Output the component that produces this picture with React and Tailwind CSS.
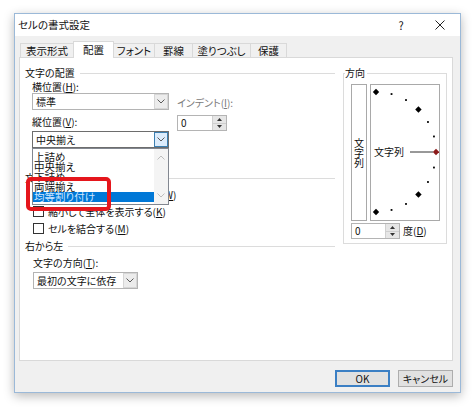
import React from 'react';

// Windows-style "セルの書式設定" dialog, 配置 tab

const Chevron = ({ className = 'text-[#5a5a5a]', up = false }) => (
  <svg width="8" height="5" viewBox="0 0 8 5" className={className}>
    <path
      d={up ? 'M0.5 4.5 L4 1 L7.5 4.5' : 'M0.5 0.5 L4 4 L7.5 0.5'}
      fill="none"
      stroke="currentColor"
      strokeWidth="1"
    />
  </svg>
);

const Combo = ({ value, width, focused = false }) => (
  <div
    className={`flex h-[17px] ${width} border bg-white ${
      focused ? 'border-[#6d6d6d]' : 'border-[#b4b4b4]'
    }`}
  >
    <div className="flex-1 pl-[3px] leading-[15px]">{value}</div>
    <div
      className={`flex w-[14px] items-center justify-center border ${
        focused ? 'border-[#3c7fb1] bg-[#dcecfc]' : 'border-[#d6d6d6] bg-[#ececec]'
      }`}
    >
      <Chevron />
    </div>
  </div>
);

const Spin = ({ width }) => (
  <div className={`flex h-[16px] ${width} border border-[#b4b4b4] bg-white`}>
    <div className="flex-1 pl-[3px] leading-[14px]">0</div>
    <div className="flex w-[14px] flex-col border-l border-[#d0d0d0] bg-[#e6e6e6]">
      <div className="flex flex-1 items-center justify-center border-b border-[#cfcfcf]">
        <svg width="5" height="3" viewBox="0 0 5 3">
          <path d="M0 3 L2.5 0 L5 3 Z" fill="#333" />
        </svg>
      </div>
      <div className="flex flex-1 items-center justify-center">
        <svg width="5" height="3" viewBox="0 0 5 3">
          <path d="M0 0 L2.5 3 L5 0 Z" fill="#333" />
        </svg>
      </div>
    </div>
  </div>
);

const SectionHeader = ({ children, className = '' }) => (
  <div className={`flex h-[12px] items-center ${className}`}>
    <span>{children}</span>
    <span className="ml-[5px] h-px flex-1 bg-[#dcdcdc]" />
  </div>
);

const Checkbox = ({ label, hotkey }) => (
  <div className="flex h-[17px] items-center gap-[4px]">
    <span className="h-[11px] w-[11px] border border-[#333] bg-white" />
    <span>
      {label}(<span className="underline">{hotkey}</span>)
    </span>
  </div>
);

const tabs = [
  { label: '表示形式', w: 'w-[54px]' },
  { label: '配置', w: 'w-[41px]', active: true },
  { label: 'フォント', w: 'w-[42px]' },
  { label: '罫線', w: 'w-[39px]' },
  { label: '塗りつぶし', w: 'w-[59px]' },
  { label: '保護', w: 'w-[37px]' },
];

const verticalOptions = ['上詰め', '中央揃え', '下詰め', '両端揃え', '均等割り付け'];

// tick marks on the orientation dial, every 15 degrees from +90 to -90
const dialMarks = Array.from({ length: 13 }, (_, i) => {
  const a = ((90 - i * 15) * Math.PI) / 180;
  return { x: 5 + 60 * Math.cos(a), y: 67 - 60 * Math.sin(a), big: i % 3 === 0, red: i === 6 };
});

const OrientationDial = () => (
  <div className="relative h-[137px] w-[70px] border border-[#a9a9a9] bg-white">
    <svg width="68" height="135" viewBox="0 0 68 135" className="absolute left-0 top-0">
      <line x1="39" y1="67" x2="62" y2="67" stroke="#333" strokeWidth="1" />
      {dialMarks.map((m, i) =>
        m.big ? (
          <polygon
            key={i}
            points={`${m.x},${m.y - 3.2} ${m.x + 3.2},${m.y} ${m.x},${m.y + 3.2} ${m.x - 3.2},${m.y}`}
            fill={m.red ? '#8b1a1a' : '#000'}
          />
        ) : (
          <rect key={i} x={m.x - 0.9} y={m.y - 0.9} width="1.8" height="1.8" fill="#000" />
        )
      )}
    </svg>
    <span className="absolute left-[3px] top-[61px] leading-[12px]">文字列</span>
  </div>
);

export default function App() {
  return (
    <div className="min-h-screen bg-white pl-[14px] pt-[13px] text-[10px] leading-[12px] text-[#111] font-['Noto_Sans_CJK_JP','Noto_Sans',sans-serif] [font-feature-settings:'palt']">
      <div className="w-[447px] border border-[#9bb9d8] bg-[#f0f0f0] shadow-[0_3px_10px_rgba(0,0,0,0.28)]">
        {/* title bar */}
        <div className="flex h-[22px] items-center bg-white pl-[3px]">
          <span className="flex-1 text-[10.5px]">セルの書式設定</span>
          <span className="w-[38px] text-center text-[11px]">?</span>
          <span className="flex w-[40px] justify-center">
            <svg width="10" height="10" viewBox="0 0 10 10">
              <path d="M0.5 0.5 L9.5 9.5 M9.5 0.5 L0.5 9.5" stroke="#222" strokeWidth="1" />
            </svg>
          </span>
        </div>

        <div className="pl-[4px] pr-[7px] pt-[5px] pb-[5px]">
          {/* tabs */}
          <div className="relative z-10 -mb-px ml-[2px] flex items-end">
            {tabs.map((t) => (
              <div
                key={t.label}
                className={`-ml-px flex ${t.w} items-center justify-center border-x border-t border-[#d9d9d9] text-[10.5px] ${
                  t.active ? 'h-[17px] bg-white' : 'mb-px h-[14px] bg-[#f0f0f0]'
                }`}
              >
                {t.label}
              </div>
            ))}
          </div>

          {/* tab page */}
          <div className="flex h-[304px] gap-[8px] border border-[#d9d9d9] bg-white px-[5px] pt-[9px]">
            <div className="w-[310px]">
              <SectionHeader>文字の配置</SectionHeader>
              <div className="mt-[2px] flex pl-[7px]">
                <div className="w-[137px]">
                  <div className="h-[12px]">
                    横位置(<span className="underline">H</span>):
                  </div>
                  <Combo value="標準" width="w-[137px]" />
                  <div className="mt-[6px] h-[12px]">
                    縦位置(<span className="underline">V</span>):
                  </div>
                  <div className="relative mt-[3px]">
                    <Combo value="中央揃え" width="w-[137px]" focused />
                    {/* open drop-down list */}
                    <div className="absolute left-0 top-full z-10 flex h-[57px] w-[137px] border border-[#828790] bg-white">
                      <div className="flex-1 pt-[3px]">
                        {verticalOptions.map((o, i) => (
                          <div
                            key={o}
                            className={`h-[10px] pl-[1px] text-[10.5px] leading-[10px] ${
                              i === 4 ? 'bg-[#0078d7] text-[#cfe6ff]' : ''
                            }`}
                          >
                            {o}
                          </div>
                        ))}
                      </div>
                      <div className="flex w-[14px] flex-col items-center justify-between bg-[#f4f4f4] py-[6px]">
                        <Chevron up className="text-[#bdbdbd]" />
                        <Chevron className="text-[#bdbdbd]" />
                      </div>
                    </div>
                    {/* highlight frame */}
                    <div className="absolute left-[-6px] top-[46px] z-20 h-[34px] w-[85px] rounded-[5px] border-[4px] border-[#e5161c]" />
                  </div>
                </div>
                <div className="ml-[8px] pt-[16px]">
                  <div className="h-[12px] text-[#7a7a7a]">
                    インデント(<span className="underline">I</span>):
                  </div>
                  <div className="mt-[6px]">
                    <Spin width="w-[50px]" />
                  </div>
                </div>
              </div>

              <SectionHeader className="mt-[24px]">文字の制御</SectionHeader>
              <div className="mt-[2px] pl-[8px]">
                <Checkbox label="折り返して全体を表示する" hotkey="W" />
                <Checkbox label="縮小して全体を表示する" hotkey="K" />
                <Checkbox label="セルを結合する" hotkey="M" />
              </div>

              <SectionHeader className="mt-[3px]">右から左</SectionHeader>
              <div className="pl-[8px]">
                <div className="mt-[5px] h-[12px]">
                  文字の方向(<span className="underline">T</span>):
                </div>
                <div className="mt-[3px]">
                  <Combo value="最初の文字に依存" width="w-[105px]" />
                </div>
              </div>
            </div>

            {/* orientation group */}
            <div className="relative mt-[6px] h-[171px] w-[104px] border border-[#dcdcdc] pl-[7px] pt-[10px]">
              <span className="absolute left-[1px] top-[-7px] bg-white pr-[2px]">方向</span>
              <div className="flex gap-[3px]">
                <div className="flex h-[137px] w-[16px] flex-col items-center justify-center border border-[#a9a9a9] bg-white leading-[10px]">
                  <span>文</span>
                  <span>字</span>
                  <span>列</span>
                </div>
                <OrientationDial />
              </div>
              <div className="mt-[2px] flex items-center gap-[3px]">
                <Spin width="w-[49px]" />
                <span>
                  度(<span className="underline">D</span>)
                </span>
              </div>
            </div>
          </div>

          {/* dialog buttons */}
          <div className="mt-[9px] flex justify-end gap-[8px]">
            <button className="h-[17px] w-[55px] border-2 border-[#3b7fc4] bg-[#e1e1e1] leading-[13px]">
              OK
            </button>
            <button className="h-[17px] w-[55px] border border-[#adadad] bg-[#e1e1e1] leading-[15px]">
              キャンセル
            </button>
          </div>
        </div>
      </div>
    </div>
  );
}
